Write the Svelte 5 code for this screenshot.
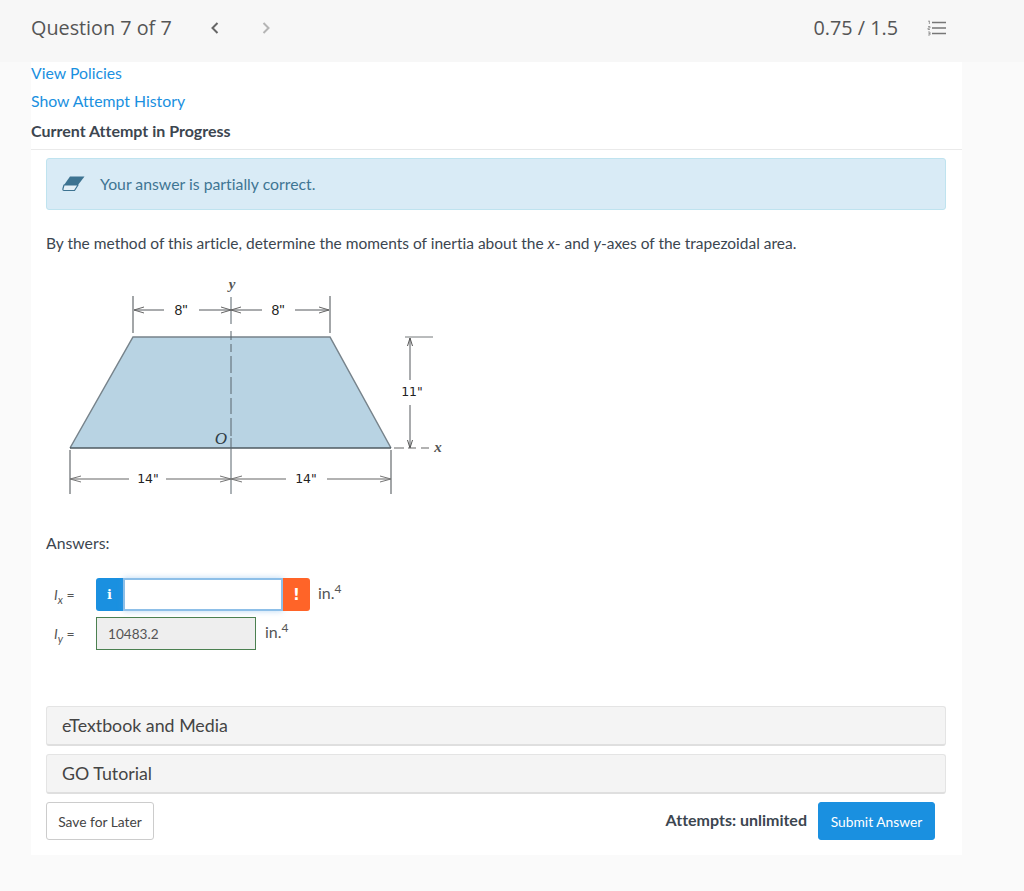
<script>
	const topRight = 330;
</script>

<header class="top">
	<div class="top-left">
		<span class="q-title">Question 7 of 7</span>
		<svg class="chev" viewBox="0 0 10 14" width="10" height="14"><path d="M7.500 2 L2.500 7 L7.500 12" fill="none" stroke="#666" stroke-width="2" /></svg>
		<svg class="chev next" viewBox="0 0 10 14" width="10" height="14"><path d="M2.500 2 L7.500 7 L2.500 12" fill="none" stroke="#b5b5b5" stroke-width="2" /></svg>
	</div>
	<div class="top-right">
		<span class="score">0.75 / 1.5</span>
		<svg class="list-icon" viewBox="0 0 20 16" width="20" height="16">
			<path d="M5 2.500 H19 M5 8 H19 M5 13.500 H19" stroke="#777" stroke-width="1.600" fill="none" />
			<path d="M1 1.200 H3 M2.400 1.200 V4 M1 6.500 H3 V8 H1 V9.500 H3 M1 12 H3 V15 H1 M1.500 13.500 H3" stroke="#888" stroke-width="0.800" fill="none" />
		</svg>
	</div>
</header>

<main class="card">
	<div class="links">
		<a href="#policies">View Policies</a>
		<a href="#history">Show Attempt History</a>
	</div>
	<h2 class="attempt">Current Attempt in Progress</h2>

	<div class="body">
		<div class="alert">
			<svg class="eraser" viewBox="0 0 24 18" width="24" height="18">
				<path d="M8 1.500 H22.500 L16 10 H2 Z" fill="#3d7391" />
				<path d="M2 10 H16 L12.500 15.500 H2 Q0.500 15.500 1 13.500 Z" fill="#e4f0f7" stroke="#3d7391" stroke-width="1.200" stroke-linejoin="round" />
			</svg>
			<span class="alert-text">Your answer is partially correct.</span>
		</div>

		<p class="question">By the method of this article, determine the moments of inertia about the <em>x</em>- and <em>y</em>-axes of the trapezoidal area.</p>

		<!-- viewBox uses page coordinates so the drawing is easy to check against the picture -->
		<svg class="figure" viewBox="46 270 400 230" width="400" height="230">
			<polygon points="133,337 {topRight},337 391,448 70,448" fill="#b8d3e3" />
			<path d="M70 448 L133 337 H{topRight} L391 448" fill="none" stroke="#77838b" stroke-width="1.500" />
			<path d="M70 448 H391" stroke="#4e5a60" stroke-width="1.500" />

			<!-- y axis -->
			<path d="M231 297 V324 M231 331 V448 M231 448 V494" stroke="#59656c" stroke-width="1" fill="none" />
			<path d="M231 340 V344 M231 352 V356 M231 373 V377 M231 394 V398 M231 414 V418 M231 436 V438" stroke="#b8d3e3" stroke-width="2" fill="none" />

			<!-- top dimension -->
			<path d="M133 296 V333 M330 296 V333" stroke="#85898c" stroke-width="1.500" />
			<path d="M134 310 H164 M199 310 H231 M231 310 H262 M295 310 H329" stroke="#55595c" stroke-width="1" />
			<path d="M144 307 L134 310 L144 313 M221 307 L231 310 L221 313 M241 307 L231 310 L241 313 M319 307 L329 310 L319 313" stroke="#666" stroke-width="1" fill="none" />

			<!-- bottom dimension -->
			<path d="M70 450 V494 M391 450 V494" stroke="#85898c" stroke-width="1.500" />
			<path d="M70 479 H129 M166 479 H231 M231 479 H286 M327 479 H391" stroke="#666" stroke-width="1.200" />
			<path d="M81 476 L70 479 L81 482 M220 476 L231 479 L220 482 M242 476 L231 479 L242 482 M380 476 L391 479 L380 482" stroke="#777" stroke-width="1" fill="none" />

			<!-- height dimension -->
			<path d="M405 337 H433" stroke="#74787b" stroke-width="1" />
			<path d="M410 338 V380 M410 405 V448" stroke="#55595c" stroke-width="1" />
			<path d="M407.500 346 L410 338 L412.500 346 M407.500 440 L410 448 L412.500 440" stroke="#555" stroke-width="1" fill="none" />
			<path d="M394 448 H404 M408 448 H416 M421 448 H429" stroke="#666" stroke-width="1.200" />

			<text x="181" y="315" class="dim" text-anchor="middle">8"</text>
			<text x="278" y="315" class="dim" text-anchor="middle">8"</text>
			<text x="148" y="483" class="dim wide" text-anchor="middle">14"</text>
			<text x="306" y="483" class="dim wide" text-anchor="middle">14"</text>
			<text x="412" y="396" class="dim wide" text-anchor="middle">11"</text>
			<text x="232" y="289" class="var" text-anchor="middle">y</text>
			<text x="438" y="452" class="var" text-anchor="middle">x</text>
			<text x="221" y="444" class="var big" text-anchor="middle">O</text>
		</svg>

		<p class="answers">Answers:</p>

		<div class="rows">
			<div class="row">
				<span class="lab"><i>I<sub>x</sub></i> =</span>
				<span class="badge info">i</span>
				<input class="field active" type="text" value="" />
				<span class="badge warn">!</span>
				<span class="unit">in.<sup>4</sup></span>
			</div>
			<div class="row">
				<span class="lab"><i>I<sub>y</sub></i> =</span>
				<input class="field done" type="text" value="10483.2" readonly />
				<span class="unit">in.<sup>4</sup></span>
			</div>
		</div>

		<div class="panel first">eTextbook and Media</div>
		<div class="panel">GO Tutorial</div>

		<div class="actions">
			<button class="save">Save for Later</button>
			<div class="submit-wrap">
				<span class="tries">Attempts: unlimited</span>
				<button class="submit">Submit Answer</button>
			</div>
		</div>
	</div>
</main>

<style>
	:global(body) {
		background: #fafafa;
		font-family: 'Lato', sans-serif;
		font-variant-ligatures: none;
		color: #3c4650;
		height: 891px;
		overflow: hidden;
	}

	.top {
		height: 54px;
		padding-top: 0;
		padding-bottom: 8px;
		background: #f7f7f7;
		display: flex;
		align-items: center;
		justify-content: space-between;
		padding-left: 31px;
		padding-right: 77px;
	}

	.top-left,
	.top-right {
		display: flex;
		align-items: center;
	}

	.q-title,
	.score {
		font-family: 'Open Sans', sans-serif;
		font-size: 19.800px;
		color: #555;
	}

	.chev {
		margin-left: 38px;
		margin-top: 2px;
	}

	.chev.next {
		margin-left: 41px;
	}

	.list-icon {
		margin-left: 29px;
		margin-top: 2px;
	}

	.card {
		width: 931px;
		height: 793px;
		margin-left: 31px;
		background: #fff;
	}

	.links {
		height: 58px;
	}

	.links a {
		display: block;
		height: 28px;
		line-height: 22px;
		color: #1a90e0;
		text-decoration: none;
		font-size: 15.800px;
	}

	.attempt {
		margin: 0;
		height: 29px;
		line-height: 22px;
		font-size: 16px;
		font-weight: 700;
		color: #3c4650;
		border-bottom: 1px solid #eaeaea;
	}

	.body {
		padding: 8px 16px 0 15px;
	}

	.alert {
		height: 50px;
		display: flex;
		align-items: center;
		background: #d9ebf6;
		border: 1px solid #bfe3ef;
		border-radius: 3px;
		color: #3f7593;
		font-size: 15.800px;
		padding-left: 15px;
	}

	.alert-text {
		margin-top: -1px;
	}

	.eraser {
		margin-right: 14px;
	}

	.question {
		margin: 23px 0 0;
		font-size: 15.500px;
		line-height: 20px;
		color: #3c4650;
	}

	.figure {
		display: block;
		margin-top: 17px;
	}

	.dim {
		font-family: 'Liberation Sans', sans-serif;
		font-size: 14px;
		fill: #222;
	}

	.dim.wide {
		font-family: 'DejaVu Sans', sans-serif;
		font-size: 12.500px;
	}

	.var {
		font-family: 'Liberation Serif', serif;
		font-style: italic;
		font-weight: 700;
		font-size: 15px;
		fill: #555;
	}

	.var.big {
		font-size: 17px;
		font-weight: 400;
		fill: #2f3c46;
	}

	.answers {
		margin: 33px 0 0;
		font-size: 15.800px;
		line-height: 20px;
	}

	.rows {
		margin-top: 25px;
		display: flex;
		flex-direction: column;
		gap: 6px;
	}

	.row {
		display: flex;
		align-items: center;
		height: 33px;
	}

	.lab {
		width: 50px;
		padding-left: 8px;
		box-sizing: border-box;
		font-size: 14px;
		color: #555;
	}

	.lab sub {
		font-size: 11px;
		line-height: 0;
	}

	.badge {
		width: 27px;
		height: 33px;
		display: flex;
		align-items: center;
		justify-content: center;
		color: #fff;
		font-family: 'DejaVu Serif', serif;
		font-weight: 700;
		font-size: 13px;
	}

	.badge.info {
		background: #1a90e0;
		border-radius: 3px 0 0 3px;
	}

	.badge.warn {
		background: #ff6428;
		border-radius: 0 3px 3px 0;
		font-family: 'DejaVu Sans', sans-serif;
		font-size: 15px;
	}

	.field {
		box-sizing: border-box;
		height: 33px;
		font-family: 'Lato', sans-serif;
		font-size: 13.600px;
		outline: none;
		border-radius: 0;
		margin: 0;
	}

	.field.active {
		width: 160px;
		border: 2px solid #8dbfe8;
		background: #fff;
		box-shadow: 0 0 6px rgba(80, 160, 230, 0.4);
	}

	.field.done {
		width: 160px;
		border: 1px solid #4b8050;
		background: #eee;
		color: #555;
		padding-left: 11px;
	}

	.unit {
		margin-left: 8px;
		font-size: 16px;
		color: #555;
		margin-top: -4px;
	}

	.field.done + .unit {
		margin-left: 9px;
	}

	.unit sup {
		font-size: 12px;
		line-height: 0;
		vertical-align: 6px;
	}

	.panel {
		box-sizing: border-box;
		height: 40px;
		margin-top: 8px;
		padding-left: 15px;
		padding-bottom: 2px;
		display: flex;
		align-items: center;
		background: #f4f4f4;
		border: 1px solid #e4e4e4;
		border-bottom: 2px solid #dfdfdf;
		border-radius: 3px;
		font-size: 17.800px;
		color: #444;
	}

	.panel.first {
		margin-top: 56px;
	}

	.actions {
		margin-top: 8px;
		display: flex;
		justify-content: space-between;
		align-items: flex-start;
	}

	.submit-wrap {
		display: flex;
		align-items: center;
		margin-right: 11px;
	}

	.tries {
		font-weight: 700;
		font-size: 16px;
		color: #3c4650;
		margin-right: 11px;
		margin-top: -3px;
	}

	button {
		font-family: 'Lato', sans-serif;
		font-size: 13.800px;
		height: 38px;
		border-radius: 3px;
		cursor: pointer;
	}

	.save {
		width: 108px;
		padding: 0;
		background: #fff;
		color: #444;
		border: 1px solid #ccc;
	}

	.submit {
		width: 117px;
		padding: 0;
		background: #1a90e0;
		color: #fff;
		border: 1px solid #1a90e0;
	}
</style>
